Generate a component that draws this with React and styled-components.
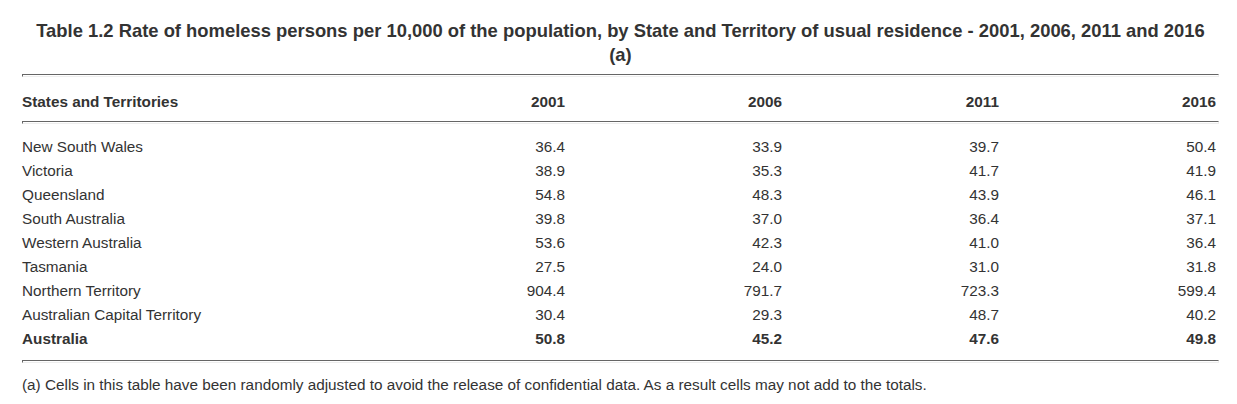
import * as React from "react";
import styled, { createGlobalStyle } from "styled-components";

const GlobalStyle = createGlobalStyle`
  body {
    margin: 0;
    background: #fff;
    font-family: "Liberation Sans", Arial, sans-serif;
    color: #333;
  }
`;

const Page = styled.div`
  width: 1197px;
  padding: 19px 0 0 22px;
`;

const Title = styled.h2`
  margin: 0 0 7px;
  font-size: 18.4px;
  line-height: 24px;
  font-weight: 700;
  text-align: center;
  color: #333;
`;

const Rule = styled.div`
  height: 1px;
  border-top: 1px solid #666;
  border-left: 1px solid #666;
  border-right: 1px solid #eee;
  border-bottom: 1px solid #eee;
`;

const Row = styled.div`
  display: grid;
  grid-template-columns: 328px repeat(4, 217px);
  font-size: 15.3px;
  line-height: 24px;
  font-weight: ${(p) => (p.$bold ? 700 : 400)};
`;

const Cell = styled.div`
  text-align: ${(p) => (p.$num ? "right" : "left")};
  padding-right: ${(p) => (p.$num ? "2px" : "0")};
  white-space: nowrap;
`;

const Head = styled.div`
  padding: 13px 0 7px;
  ${Row} {
    font-weight: 700;
  }
`;

const Body = styled.div`
  padding: 11px 0 9px;
`;

const Footnote = styled.p`
  margin: 0;
  padding-top: 10px;
  font-size: 15.3px;
  line-height: 24px;
`;

const years = ["2001", "2006", "2011", "2016"];

const rows = [
  ["New South Wales", "36.4", "33.9", "39.7", "50.4"],
  ["Victoria", "38.9", "35.3", "41.7", "41.9"],
  ["Queensland", "54.8", "48.3", "43.9", "46.1"],
  ["South Australia", "39.8", "37.0", "36.4", "37.1"],
  ["Western Australia", "53.6", "42.3", "41.0", "36.4"],
  ["Tasmania", "27.5", "24.0", "31.0", "31.8"],
  ["Northern Territory", "904.4", "791.7", "723.3", "599.4"],
  ["Australian Capital Territory", "30.4", "29.3", "48.7", "40.2"],
];

const total = ["Australia", "50.8", "45.2", "47.6", "49.8"];

const App = () => {
  return (
    <Page>
      <GlobalStyle />
      <Title>
        Table 1.2 Rate of homeless persons per 10,000 of the population, by
        State and Territory of usual residence - 2001, 2006, 2011 and 2016
        <br />
        (a)
      </Title>
      <Rule />
      <Head>
        <Row>
          <Cell>States and Territories</Cell>
          {years.map((y) => (
            <Cell $num key={y}>
              {y}
            </Cell>
          ))}
        </Row>
      </Head>
      <Rule />
      <Body>
        {rows.map((r) => (
          <Row key={r[0]}>
            <Cell>{r[0]}</Cell>
            {r.slice(1).map((v, i) => (
              <Cell $num key={i}>
                {v}
              </Cell>
            ))}
          </Row>
        ))}
        <Row $bold>
          <Cell>{total[0]}</Cell>
          {total.slice(1).map((v, i) => (
            <Cell $num key={i}>
              {v}
            </Cell>
          ))}
        </Row>
      </Body>
      <Rule />
      <Footnote>
        (a) Cells in this table have been randomly adjusted to avoid the release
        of confidential data. As a result cells may not add to the totals.
      </Footnote>
    </Page>
  );
};

export default App;
